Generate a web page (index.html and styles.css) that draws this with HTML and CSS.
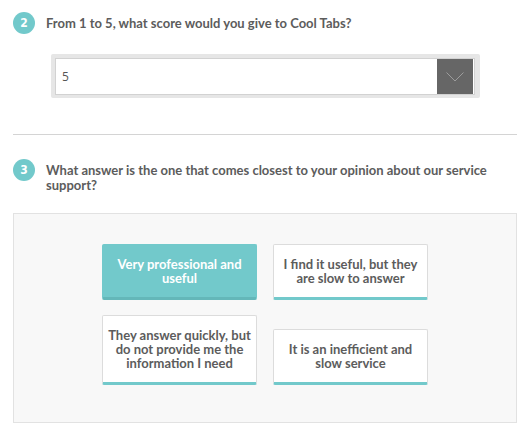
FILE: index.html
```html
<!DOCTYPE html>
<html>
<head>
<meta charset="utf-8">
<link rel="stylesheet" href="styles.css">
</head>
<body>
<div class="page">
  <div class="q q2">
    <div class="qhead">
      <span class="num">2</span>
      <span class="qtitle">From 1 to 5, what score would you give to Cool Tabs?</span>
    </div>
    <div class="select">
      <div class="field">
        <span class="val">5</span>
        <span class="arrow"><svg width="36" height="35" viewBox="0 0 36 35"><polyline points="9.5,13.5 18,22 26.5,13.5" fill="none" stroke="#9c9c9c" stroke-width="1"/></svg></span>
      </div>
    </div>
  </div>
  <div class="divider"></div>
  <div class="q q3">
    <div class="qhead">
      <span class="num">3</span>
      <span class="qtitle">What answer is the one that comes closest to your opinion about our service support?</span>
    </div>
    <div class="panel">
      <div class="opts">
        <div class="opt selected">Very professional and useful</div>
        <div class="opt">I find it useful, but they are slow to answer</div>
        <div class="opt">They answer quickly, but do not provide me the information I need</div>
        <div class="opt">It is an inefficient and slow service</div>
      </div>
    </div>
  </div>
</div>
</body>
</html>
```

FILE: styles.css
```css
html, body {
  margin: 0;
  padding: 0;
  background: #ffffff;
}
body {
  font-family: "Lato", "Open Sans", sans-serif;
  color: #5c5c5c;
}
.page {
  padding: 12px 11px 0 13px;
}
.qhead {
  display: flex;
  align-items: flex-start;
  gap: 11px;
}
.num {
  flex: 0 0 22px;
  width: 22px;
  height: 22px;
  border-radius: 50%;
  background: #72c9cb;
  color: #ffffff;
  font-family: "DejaVu Sans", sans-serif;
  font-stretch: condensed;
  font-weight: bold;
  font-size: 12px;
  line-height: 22px;
  text-align: center;
}
.qtitle {
  padding-top: 4px;
  font-weight: 700;
  font-size: 13px;
  line-height: 15px;
  color: #5c5c5c;
}
.select {
  margin: 20px 0 0 38px;
  width: 429px;
  box-sizing: border-box;
  padding: 4px 5px 3px 4px;
  background: #e6e6e6;
  border-radius: 2px;
}
.field {
  display: flex;
  align-items: center;
  height: 37px;
  box-sizing: border-box;
  border: 1px solid #d2d2d2;
  background: #ffffff;
}
.val {
  flex: 1;
  padding-left: 6px;
  font-family: "Open Sans", sans-serif;
  font-size: 12px;
  color: #555;
}
.arrow {
  display: block;
  width: 36px;
  height: 35px;
  margin-right: 1px;
  background: #666666;
}
.arrow svg {
  display: block;
}
.divider {
  margin-top: 36px;
  height: 1px;
  background: #d4d4d4;
}
.q3 {
  margin-top: 24px;
}
.panel {
  margin-top: 20px;
  box-sizing: border-box;
  height: 210px;
  padding-top: 30px;
  background: #f8f8f8;
  border: 1px solid #e2e2e2;
}
.opts {
  width: 326px;
  margin: 0 auto;
  display: flex;
  flex-wrap: wrap;
  align-items: flex-end;
  column-gap: 16px;
  row-gap: 15px;
}
.opt {
  width: 155px;
  box-sizing: border-box;
  padding: 12px 5px 12px;
  background: #ffffff;
  border: 1px solid #dcdcdc;
  border-bottom: 3px solid #72c9cb;
  border-radius: 2px;
  text-align: center;
  font-weight: 700;
  font-size: 13px;
  line-height: 14px;
  color: #5c5c5c;
}
.opt.selected {
  background: #72c9cb;
  border-color: #72c9cb;
  border-bottom-color: #64b7b9;
  color: #ffffff;
}
```
